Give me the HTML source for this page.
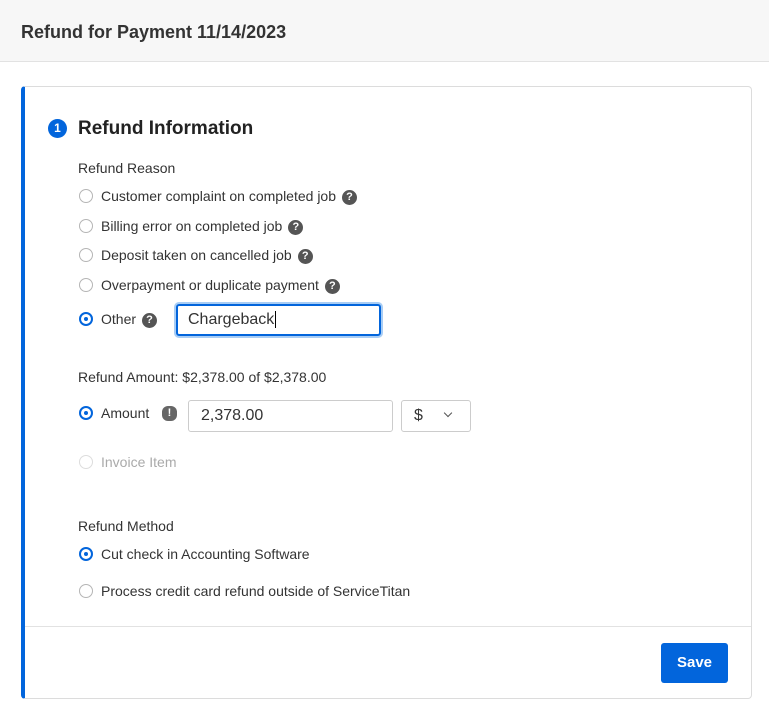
<!DOCTYPE html>
<html><head><style>
*{box-sizing:border-box;margin:0;padding:0}
body{width:769px;height:704px;background:#fff;font-family:"Liberation Sans",sans-serif;color:#333;position:relative;overflow:hidden;font-size:14px}
.hdr{position:absolute;left:0;top:0;width:769px;height:62px;background:#f7f7f7;border-bottom:1px solid #e2e2e2}
.hdr h1{position:absolute;left:21px;top:22px;font-size:18px;font-weight:bold;color:#333}
.card{position:absolute;left:21px;top:86px;width:731px;height:613px;border:1px solid #dcdcdc;border-left:4px solid #0265dc;border-radius:4px}
.a{position:absolute;white-space:nowrap}
.r{position:absolute;width:14px;height:14px;border:1px solid #b5b5b5;border-radius:50%;background:#fff}
.r.on{border:2px solid #0265dc}
.r.on::after{content:"";position:absolute;left:3px;top:3px;width:4px;height:4px;border-radius:50%;background:#0265dc}
.r.dis{border-color:#ddd}
.q{display:inline-block;width:15px;height:15px;border-radius:50%;background:#555;color:#fff;font-size:11px;font-weight:bold;text-align:center;line-height:15px;vertical-align:1px;margin-left:6px}
.inp{position:absolute;border:1px solid #ccc;border-radius:3px;font-size:16px;padding-left:12px;color:#333}
</style></head><body>
<div class="hdr"><h1>Refund for Payment 11/14/2023</h1></div>
<div class="card">
<div style="position:absolute;left:0;right:0;top:539px;border-top:1px solid #e2e2e2"></div>
</div>
<div class="a" style="left:48px;top:119px;width:19px;height:19px;border-radius:50%;background:#0265dc;color:#fff;font-size:12px;font-weight:bold;text-align:center;line-height:19px">1</div>
<div class="a" style="left:78px;top:118px;font-size:19px;font-weight:bold;color:#222">Refund Information</div>
<div class="a" style="left:78px;top:160px">Refund Reason</div>
<div class="r" style="left:79px;top:189px"></div><div class="a" style="left:101px;top:188px">Customer complaint on completed job<span class="q">?</span></div>
<div class="r" style="left:79px;top:219px"></div><div class="a" style="left:101px;top:218px">Billing error on completed job<span class="q">?</span></div>
<div class="r" style="left:79px;top:248px"></div><div class="a" style="left:101px;top:247px">Deposit taken on cancelled job<span class="q">?</span></div>
<div class="r" style="left:79px;top:278px"></div><div class="a" style="left:101px;top:277px">Overpayment or duplicate payment<span class="q">?</span></div>
<div class="r on" style="left:79px;top:312px"></div><div class="a" style="left:101px;top:311px">Other<span class="q">?</span></div>
<div class="inp" style="left:176px;top:304px;width:205px;height:32px;border:2px solid #0265dc;box-shadow:0 0 0 2px #a8cdf5;line-height:28px;padding-left:10px">Chargeback<span style="border-left:1px solid #000;margin-left:1px"></span></div>
<div class="a" style="left:78px;top:369px">Refund Amount: $2,378.00 of $2,378.00</div>
<div class="r on" style="left:79px;top:406px"></div><div class="a" style="left:101px;top:405px">Amount</div>
<div class="a" style="left:162px;top:406px;width:15px;height:15px;border-radius:6px;background:#666;color:#fff;font-size:11px;font-weight:bold;text-align:center;line-height:15px">!</div>
<div class="inp" style="left:188px;top:400px;width:205px;height:32px;line-height:30px">2,378.00</div>
<div class="inp" style="left:401px;top:400px;width:70px;height:32px;line-height:30px">$<span style="position:absolute;left:43px;top:9px;width:6px;height:6px;border-right:1.5px solid #555;border-bottom:1.5px solid #555;transform:rotate(45deg)"></span></div>
<div class="r dis" style="left:79px;top:455px"></div><div class="a" style="left:101px;top:454px;color:#aaa">Invoice Item</div>
<div class="a" style="left:78px;top:518px">Refund Method</div>
<div class="r on" style="left:79px;top:547px"></div><div class="a" style="left:101px;top:546px">Cut check in Accounting Software</div>
<div class="r" style="left:79px;top:584px"></div><div class="a" style="left:101px;top:583px">Process credit card refund outside of ServiceTitan</div>
<div class="a" style="left:661px;top:643px;width:67px;height:40px;background:#0265dc;border-radius:3px;color:#fff;font-weight:bold;font-size:15px;text-align:center;line-height:40px">Save</div>
</body></html>
